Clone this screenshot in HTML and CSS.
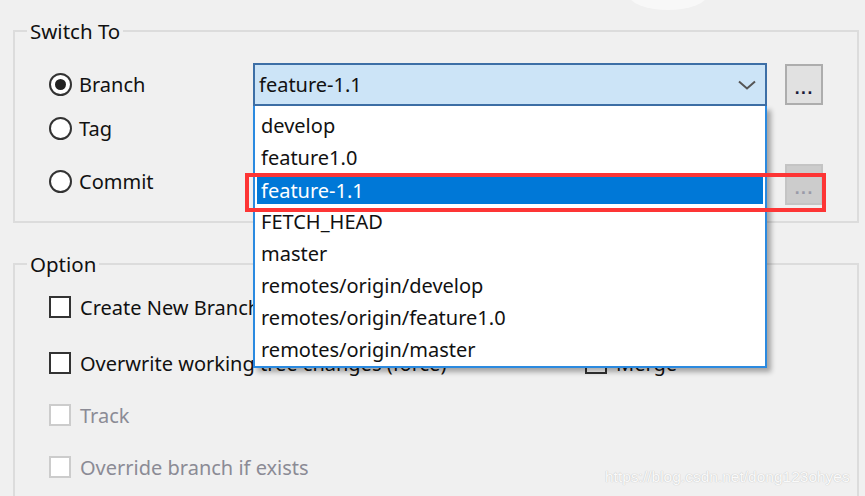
FILE: index.html
```html
<!DOCTYPE html>
<html lang="en">
<head>
<meta charset="utf-8">
<title>Switch/Checkout</title>
<link rel="stylesheet" href="styles.css">
</head>
<body>
<div class="dialog">
  <div class="cloud"></div>

  <fieldset class="group group-switch">
    <legend>Switch To</legend>
    <div class="group-body">
      <div class="row row-branch">
        <label class="choice"><span class="radio checked"></span><span>Branch</span></label>
        <div class="combo">
          <span class="combo-text">feature-1.1</span>
          <svg class="chevron" width="18" height="10" viewBox="0 0 18 10"><path d="M1 1.5 L9 8.5 L17 1.5" fill="none" stroke="#555" stroke-width="2"/></svg>
          <ul class="dropdown">
            <li class="item">develop</li>
            <li class="item">feature1.0</li>
            <li class="item sel"><span>feature-1.1</span></li>
            <li class="item">FETCH_HEAD</li>
            <li class="item">master</li>
            <li class="item">remotes/origin/develop</li>
            <li class="item">remotes/origin/feature1.0</li>
            <li class="item">remotes/origin/master</li>
          </ul>
        </div>
        <button class="more">...</button>
      </div>
      <div class="row row-tag">
        <label class="choice"><span class="radio"></span><span>Tag</span></label>
      </div>
      <div class="row row-commit">
        <label class="choice"><span class="radio"></span><span>Commit</span></label>
        <div class="spacer"></div>
        <button class="more disabled">...</button>
      </div>
    </div>
  </fieldset>

  <fieldset class="group group-option">
    <legend>Option</legend>
    <div class="group-body">
      <div class="crow crow-first">
        <label class="check"><span class="box"></span><span>Create New Branch</span></label>
      </div>
      <div class="crow">
        <label class="check wide"><span class="box"></span><span>Overwrite working tree changes (force)</span></label>
        <label class="check"><span class="box"></span><span>Merge</span></label>
      </div>
      <div class="crow">
        <label class="check off"><span class="box"></span><span>Track</span></label>
      </div>
      <div class="crow">
        <label class="check off"><span class="box"></span><span>Override branch if exists</span></label>
      </div>
    </div>
  </fieldset>

  <div class="highlight"></div>
  <div class="watermark">https://blog.csdn.net/dong123ohyes</div>
</div>
</body>
</html>
```

FILE: styles.css
```css
html, body {
  margin: 0;
  padding: 0;
  background: #f0f0f0;
  overflow: hidden;
}

.dialog {
  position: relative;
  width: 865px;
  height: 496px;
  overflow: hidden;
  padding: 19px 0 0 13px;
  box-sizing: border-box;
  font-family: "Noto Sans", "Open Sans", sans-serif;
  font-size: 20px;
  color: #111;
}

.cloud {
  position: absolute;
  left: 628px;
  top: -22px;
  width: 80px;
  height: 32px;
  border-radius: 50%;
  background: #f8f8f8;
}

.group {
  margin: 0;
  padding: 0;
  width: 846px;
  box-sizing: border-box;
  border: 2px solid #dcdcdc;
  min-width: 0;
}

.group legend {
  margin-left: 12px;
  padding: 0 3px;
  line-height: 24px;
  font-size: 20.5px;
}

.group-switch .group-body {
  padding: 20px 0 16px 34px;
}

.group-option {
  margin-top: 29px;
  height: 300px;
}

.group-option .group-body {
  padding: 15px 0 0 34px;
}

.row {
  display: flex;
  align-items: center;
}

.row-branch { height: 43px; }
.row-tag { height: 32px; margin-top: 6px; }
.row-commit { height: 41px; margin-top: 20px; }
.row-commit .choice { margin-bottom: 6px; }

.choice {
  width: 204px;
  display: flex;
  align-items: center;
  gap: 7px;
}

.radio {
  width: 23px;
  height: 23px;
  box-sizing: border-box;
  border: 2px solid #333;
  border-radius: 50%;
  background: #fff;
  display: flex;
  align-items: center;
  justify-content: center;
}

.radio.checked::after {
  content: "";
  width: 11px;
  height: 11px;
  border-radius: 50%;
  background: #222;
}

.combo {
  position: relative;
  width: 514px;
  height: 43px;
  box-sizing: border-box;
  border: 2px solid #3d6fa6;
  background: #cce4f7;
  display: flex;
  align-items: center;
  justify-content: space-between;
  padding: 0 9px 1px 4px;
  z-index: 2;
}

.chevron {
  margin-top: 2px;
}

.dropdown {
  position: absolute;
  left: -2px;
  top: 41px;
  width: 514px;
  margin: 0;
  padding: 4px 0 0;
  list-style: none;
  background: #fff;
  box-sizing: border-box;
  border: 2px solid #2b8ae0;
  border-top: none;
  box-shadow: 4px 4px 5px rgba(0, 0, 0, 0.32);
}

.item {
  height: 32px;
  line-height: 31px;
  padding-left: 6px;
  white-space: nowrap;
}

.item.sel {
  padding: 3px 2px 2px 2px;
  box-sizing: border-box;
  line-height: 27px;
}

.item.sel span {
  display: block;
  height: 27px;
  padding-left: 4px;
  background: #0078d7;
  color: #fff;
}

.more {
  margin-left: 18px;
  width: 38px;
  height: 41px;
  box-sizing: border-box;
  border: 2px solid #adadad;
  background: #e1e1e1;
  font-family: "DejaVu Sans", sans-serif;
  font-weight: bold;
  font-size: 14px;
  letter-spacing: 1px;
  color: #1a1a3a;
  padding: 8px 0 0;
  text-align: center;
}

.more.disabled {
  background: #cccccc;
  border-color: #c4c4c4;
  color: #9a9aa8;
}

.spacer {
  width: 514px;
}

.crow {
  height: 32px;
  display: flex;
  align-items: center;
  margin-top: 20px;
}

.crow-first {
  margin-top: 0;
}

.crow + .crow:nth-child(2) {
  margin-top: 24px;
}

.check {
  display: flex;
  align-items: center;
  gap: 9px;
  white-space: nowrap;
}

.check.wide {
  width: 536px;
}

.box {
  width: 22px;
  height: 22px;
  box-sizing: border-box;
  border: 2px solid #333;
  background: #fff;
}

.check.off {
  color: #8b8b95;
}

.check.off .box {
  border-color: #cccccc;
}

.highlight {
  position: absolute;
  left: 245px;
  top: 173px;
  width: 581px;
  height: 39px;
  box-sizing: border-box;
  border: 4px solid #fd3535;
  z-index: 5;
}

.watermark {
  position: absolute;
  left: 605px;
  top: 468px;
  font-family: "Liberation Sans", Arial, sans-serif;
  font-size: 15.5px;
  color: #fafafa;
  text-shadow: 0 0 1px #c4c4c4, 0 0 1px #cfcfcf;
  white-space: nowrap;
  z-index: 6;
}
```
